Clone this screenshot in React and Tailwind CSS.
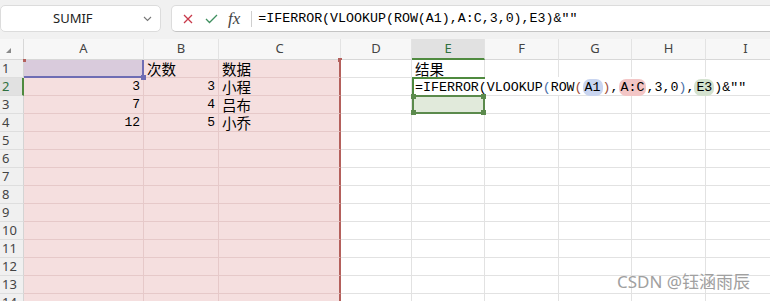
import React from "react";

const mono = "font-['Liberation_Mono','Noto_Sans_CJK_SC',monospace]";
const cjk = "font-['Noto_Sans_CJK_SC',sans-serif]";
const ui = "font-['Noto_Sans','Liberation_Sans',sans-serif]";

const columns = ["A", "B", "C", "D", "E", "F", "G", "H", "I"];

const data = {
  1: { B: "次数", C: "数据", E: "结果" },
  2: { A: "3", B: "3", C: "小程" },
  3: { A: "7", B: "4", C: "吕布" },
  4: { A: "12", B: "5", C: "小乔" },
};

const Handle = ({ className }) => (
  <span className={`absolute w-[5px] h-[5px] ${className}`} />
);

const TopBar = () => (
  <div className="h-[39px] bg-[#f1f1f1] flex items-start pt-[5px] gap-[10px]">
    <div className="w-[161px] h-[27px] bg-white border border-[#dcdcdc] rounded-[5px] flex items-center shrink-0">
      <span className={`${ui} text-[13px] text-[#222] ml-[52px]`}>SUMIF</span>
      <svg className="ml-auto mr-[8px]" width="9" height="6" viewBox="0 0 9 6">
        <path d="M1 1 L4.5 4.5 L8 1" fill="none" stroke="#777" strokeWidth="1.1" />
      </svg>
    </div>
    <div className="w-[620px] h-[27px] bg-white border border-[#dcdcdc] border-b-[#c4c4c4] rounded-[5px] flex items-center shrink-0">
      <svg className="ml-[11px]" width="10" height="10" viewBox="0 0 10 10">
        <path d="M1 1 L9 9 M9 1 L1 9" stroke="#c8394a" strokeWidth="1.3" />
      </svg>
      <svg className="ml-[12px]" width="13" height="10" viewBox="0 0 13 10">
        <path d="M1 5 L4.5 8.5 L12 1" fill="none" stroke="#3f8f5f" strokeWidth="1.3" />
      </svg>
      <span className="ml-[10px] font-['Liberation_Serif',serif] italic text-[17px] text-[#444] leading-none">fx</span>
      <span className="ml-[11px] w-px h-[16px] bg-[#cfcfcf]" />
      <span className={`${mono} ml-[6px] text-[13.3px] text-black whitespace-nowrap`}>
        =IFERROR(VLOOKUP(ROW(A1),A:C,3,0),E3)&amp;""
      </span>
    </div>
  </div>
);

const CellFormula = () => (
  <div className={`${mono} h-[19px] flex items-center text-[13.3px] leading-none text-black whitespace-nowrap pl-[1px] border-l-2 border-t-2 border-[#4f8a3f]`}>
    =IFERROR(VLOOKUP<span className="text-[#4a6fa8]">(</span>ROW
    <span className="text-[#a0503c]">(</span>
    <span className="bg-[#c9d5f0] rounded-[7px] px-[2px] py-[2px]">A1</span>
    <span className="text-[#a0503c]">)</span>,
    <span className="bg-[#f3c6c6] rounded-[7px] px-[2px] py-[2px]">A:C</span>,3,0
    <span className="text-[#4a6fa8]">)</span>,
    <span className="bg-[#d4e2cf] rounded-[7px] px-[2px] py-[2px]">E3</span>)&amp;""
  </div>
);

const Sheet = () => {
  const rows = Array.from({ length: 14 }, (_, i) => i + 1);
  return (
    <div className="grid grid-cols-[24px_120px_75px_122px_71px_73px_74px_73px_74px_80px] grid-rows-[21px_repeat(14,18px)]">
      {/* header row */}
      <div className="bg-[#f7f7f7] border-r border-b border-[#d8d8d8] flex items-end pl-[6px] pb-[6px]">
        <svg width="5" height="5" viewBox="0 0 5 5">
          <path d="M5 0 L5 5 L0 5 Z" fill="#8a8a8a" />
        </svg>
      </div>
      {columns.map((c) => (
        <div
          key={c}
          className={`${ui} text-[13px] flex items-center justify-center border-r border-[#e3e3e3] ${
            c === "E"
              ? "bg-[#e1e1e1] border-b-2 border-b-[#4f8a3f] text-[#2f7040]"
              : "bg-[#f7f7f7] border-b border-b-[#d8d8d8] text-[#444]"
          }`}
        >
          {c}
        </div>
      ))}

      {rows.map((r) => (
        <React.Fragment key={r}>
          <div
            className={`${ui} text-[13px] leading-[17px] pl-[2px] border-b border-[#dedede] ${
              r === 2
                ? "bg-[#e1e1e1] text-[#2f7040] border-r-2 border-r-[#4f8a3f]"
                : "bg-[#f0f0f0] text-[#444] border-r border-r-[#d4d4d4]"
            }`}
          >
            {r}
          </div>
          {columns.map((c) => {
            const v = data[r]?.[c];
            const pink = c === "A" || c === "B" || c === "C";
            if (r === 2 && c === "E") {
              return (
                <div key={c} className="col-span-5 bg-white border-b border-b-[#e2e2e2] -mt-px z-10 grid grid-cols-[73px_1fr] content-start">
                  <CellFormula />
                </div>
              );
            }
            if (r === 2 && ["F", "G", "H", "I"].includes(c)) return null;
            if (r === 3 && c === "E") {
              return (
                <div key={c} className="relative bg-[#e1eadb] border-2 border-[#5b8a4c] -mt-px z-20">
                  <Handle className="bg-[#5b8a4c] left-[-3px] top-[-3px]" />
                  <Handle className="bg-[#5b8a4c] right-[-3px] top-[-3px]" />
                  <Handle className="bg-[#5b8a4c] left-[-3px] bottom-[-3px]" />
                  <Handle className="bg-[#5b8a4c] right-[-3px] bottom-[-3px]" />
                </div>
              );
            }
            const numeric = v && /^\d+$/.test(v);
            const isA1 = r === 1 && c === "A";
            let tone = "bg-white border-r border-b border-[#e2e2e2]";
            if (pink) tone = "bg-[#f5dfdf] border-r border-b border-[#e6c9c9]";
            if (c === "C") tone = "bg-[#f5dfdf] border-b border-[#e6c9c9] border-r-2 border-r-[#b4605c]";
            if (isA1) tone = "bg-[#d9cbdc] border-b-2 border-r-2 border-[#6e6db4] z-10";
            return (
              <div
                key={c}
                className={`relative leading-[18px] px-[3px] whitespace-nowrap ${tone} ${
                  numeric ? `${mono} text-[13px] text-right` : `${cjk} text-[14.5px]`
                } text-black`}
              >
                {isA1 && (
                  <>
                    <Handle className="bg-[#b4605c] left-[-1px] top-[-1px] !w-[3px] !h-[3px]" />
                    <Handle className="bg-[#6e6db4] right-[-4px] bottom-[-4px]" />
                  </>
                )}
                {r === 1 && c === "C" && (
                  <Handle className="bg-[#b4605c] right-[-3px] top-[-2px] !w-[4px] !h-[4px]" />
                )}
                {v}
              </div>
            );
          })}
        </React.Fragment>
      ))}
    </div>
  );
};

export default function App() {
  return (
    <div className="w-[770px] h-[301px] overflow-hidden bg-white relative">
      <TopBar />
      <Sheet />
      <div className="absolute left-[617px] top-[272px] font-['Noto_Sans','Noto_Sans_CJK_SC',sans-serif] text-[17px] leading-[20px] text-[#a0a0a0] whitespace-nowrap">
        CSDN @钰涵雨辰
      </div>
    </div>
  );
}
